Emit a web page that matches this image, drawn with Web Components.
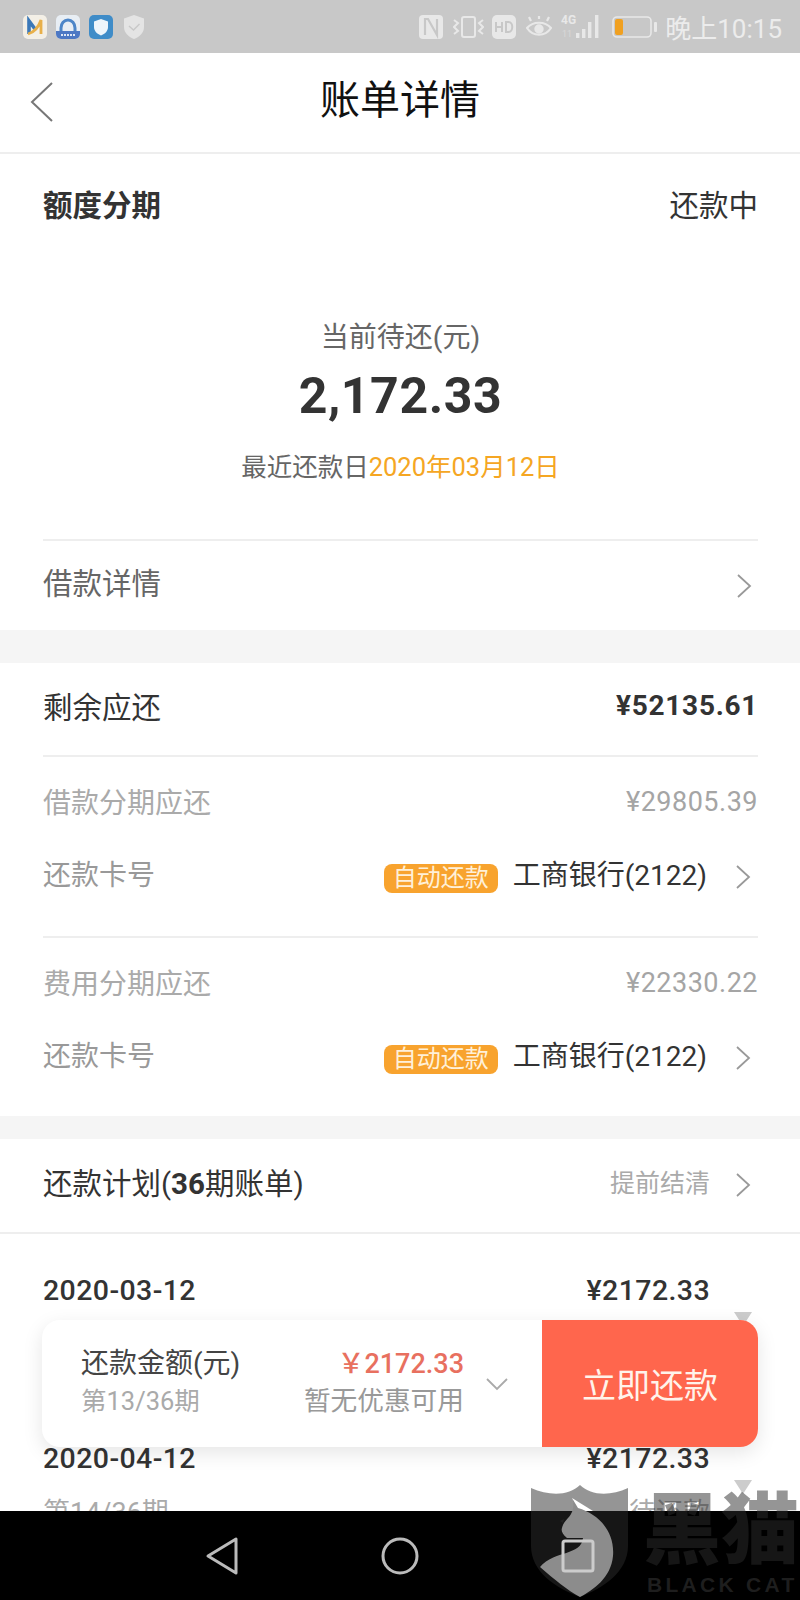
<!DOCTYPE html>
<html>
<head>
<meta charset="utf-8">
<style>
html, body { margin: 0; padding: 0; background: #fff; }
body { width: 800px; height: 1600px; overflow: hidden; font-family: Roboto, "Noto Sans CJK SC", sans-serif; }
</style>
</head>
<body>
<bill-app>
  <status-bar slot="status"></status-bar>
  <nav-header slot="nav" title="账单详情"></nav-header>

  <bill-section style="height:476px">
    <summary-card></summary-card>
  </bill-section>
  <gap-bar h="33"></gap-bar>
  <bill-section style="height:453px">
    <remain-panel></remain-panel>
  </bill-section>
  <gap-bar h="23"></gap-bar>
  <plan-panel></plan-panel>

  <pay-bar slot="over"></pay-bar>
  <system-nav slot="over"></system-nav>
  <black-cat slot="over"></black-cat>
</bill-app>

<script>
const CJK = 'Roboto, "Noto Sans CJK SC", sans-serif'

function chevron(color) {
    return `<svg width="16" height="26" viewBox="0 0 16 26" fill="none"><path d="M2 2 L14 13 L2 24" stroke="${color || '#999'}" stroke-width="1.8"/></svg>`
}

class BillApp extends HTMLElement {
    constructor() {
        super()
        this.attachShadow({mode: 'open'}).innerHTML = `
        <style>
            :host { display: block; position: relative; width: 800px; height: 1600px; overflow: hidden; background: #fff; color: #333; font-family: ${CJK}; }
            .wrap { display: flex; flex-direction: column; height: 1600px; }
            .content { flex: 1; overflow: hidden; }
        </style>
        <div class="wrap">
            <slot name="status"></slot>
            <slot name="nav"></slot>
            <div class="content"><slot></slot></div>
        </div>
        <slot name="over"></slot>`
    }
}

class StatusBar extends HTMLElement {
    constructor() {
        super()
        this.attachShadow({mode: 'open'}).innerHTML = `
        <style>
            :host { display: flex; align-items: center; justify-content: space-between; height: 53px; background: #c8c8c8; padding: 0 18px 0 23px; box-sizing: border-box; }
            .l, .r { display: flex; align-items: center; }
            .l { gap: 9px; }
            svg { display: block; }
            .time { color: #ececec; font-size: 26px; margin-left: 8px; }
        </style>
        <div class="l">
            <svg width="24" height="24" viewBox="0 0 24 24"><rect width="24" height="24" rx="5" fill="#f3efe6"/><path d="M6 19 V6 L12 14" fill="none" stroke="#3b78b8" stroke-width="3.6"/><path d="M5 19 C12 17 16 11 18 5 V19" fill="none" stroke="#e8b04a" stroke-width="2.8"/></svg>
            <svg width="24" height="24" viewBox="0 0 24 24"><rect width="24" height="24" rx="5" fill="#e8eef4"/><path d="M5 16 V13 A7 8 0 0 1 19 13 V16" fill="none" stroke="#4d86c8" stroke-width="3"/><path d="M0 16 H24 V19 A5 5 0 0 1 19 24 H5 A5 5 0 0 1 0 19 Z" fill="#4d78c4"/><path d="M5 20 H19" stroke="#dfe8f5" stroke-width="2" stroke-dasharray="2 1"/></svg>
            <svg width="24" height="24" viewBox="0 0 24 24"><rect width="24" height="24" rx="5" fill="#3f8cc8"/><path d="M12 4 L19 6.5 V12 C19 16 16 19 12 20.5 C8 19 5 16 5 12 V6.5 Z" fill="#eef5fb"/></svg>
            <svg width="22" height="26" viewBox="0 0 22 26" style="margin-left:1px"><path d="M11 1 L21 4.5 V13 C21 19 16 23 11 25 C6 23 1 19 1 13 V4.5 Z" fill="#e4e4e4"/><path d="M6 12 L10.5 16 L16.5 10" fill="none" stroke="#c8c8c8" stroke-width="1.4"/></svg>
        </div>
        <div class="r">
            <svg width="24" height="24" viewBox="0 0 24 24"><rect width="24" height="24" rx="4" fill="#e8e8e8"/><path d="M6 20 V4 L9 4 L18 20 L18 4" fill="none" stroke="#c8c8c8" stroke-width="2.2"/></svg>
            <svg style="margin-left:10px" width="31" height="24" viewBox="0 0 31 24" fill="none" stroke="#e8e8e8" stroke-width="2"><rect x="9" y="2" width="13" height="20" rx="2"/><path d="M1 5 L5 8 L1 12 L5 16 L1 19 M30 5 L26 8 L30 12 L26 16 L30 19"/></svg>
            <svg style="margin-left:8px" width="24" height="24" viewBox="0 0 24 24"><rect width="24" height="24" rx="5" fill="#e8e8e8"/><path d="M4 7 V17 M10 7 V17 M4 12 H10 M14 7 V17 H16.5 C21.5 17 21.5 7 16.5 7 Z" fill="none" stroke="#c8c8c8" stroke-width="2"/></svg>
            <svg style="margin-left:10px" width="26" height="22" viewBox="0 0 26 22" fill="none" stroke="#e8e8e8" stroke-width="2.2"><path d="M1 12 C7 5 19 5 25 12 C19 21 7 21 1 12 Z"/><circle cx="13" cy="13" r="3.6" fill="#e8e8e8"/><path d="M5 5 L3 1 M13 3 V0 M21 5 L23 1"/></svg>
            <svg style="margin-left:9px" width="39" height="25" viewBox="0 0 39 25"><text x="0" y="10" font-size="12" font-weight="700" fill="#e8e8e8" font-family="Roboto">4G</text><text x="1" y="23" font-size="9" fill="#d8d8d8" font-family="Roboto">11</text><rect x="15" y="19" width="3.4" height="5" fill="#e8e8e8"/><rect x="21" y="15" width="3.4" height="9" fill="#e8e8e8"/><rect x="27" y="8" width="3.4" height="16" fill="#e8e8e8"/><rect x="34" y="1" width="3.4" height="23" fill="#e8e8e8"/></svg>
            <svg style="margin-left:12px" width="45" height="22" viewBox="0 0 45 22"><rect x="1" y="1" width="38" height="20" rx="4" fill="none" stroke="#e8e8e8" stroke-width="1.6"/><rect x="3" y="3" width="8" height="16" rx="2" fill="#f0a020"/><rect x="42" y="6" width="3" height="10" rx="1" fill="#e8e8e8"/></svg>
            <span class="time">晚上10:15</span>
        </div>`
    }
}

class NavHeader extends HTMLElement {
    constructor() {
        super()
        this.attachShadow({mode: 'open'}).innerHTML = `
        <style>
            :host { display: flex; align-items: center; justify-content: center; position: relative; height: 101px; box-sizing: border-box; background: #fff; border-bottom: 2px solid #eee; padding-bottom: 12px; }
            h1 { margin: 0; font-weight: 400; font-size: 40px; color: #111; }
            svg { position: absolute; left: 30px; top: 29px; }
        </style>
        <svg width="24" height="40" viewBox="0 0 24 40" fill="none"><path d="M22 1 L2 20 L22 39" stroke="#777" stroke-width="2"/></svg>
        <h1>${this.getAttribute('title')}</h1>`
    }
}

class BillSection extends HTMLElement {
    constructor() {
        super()
        this.attachShadow({mode: 'open'}).innerHTML = `
        <style>:host { display: block; background: #fff; padding: 0 42px 0 43px; box-sizing: border-box; }</style>
        <slot></slot>`
    }
}

class GapBar extends HTMLElement {
    constructor() {
        super()
        this.attachShadow({mode: 'open'}).innerHTML = `
        <style>:host { display: block; background: #f5f5f5; height: ${this.getAttribute('h')}px; }</style>`
    }
}

class SummaryCard extends HTMLElement {
    constructor() {
        super()
        this.attachShadow({mode: 'open'}).innerHTML = `
        <style>
            :host { display: flex; flex-direction: column; height: 476px; }
            .top { display: flex; justify-content: space-between; align-items: center; height: 100px; padding-bottom: 2px; box-sizing: border-box; }
            b { font-size: 29.5px; font-weight: 700; color: #333; }
            .state { font-size: 29.5px; color: #333; }
            .mid { height: 287px; display: flex; flex-direction: column; align-items: center; border-bottom: 2px solid #eee; box-sizing: border-box; }
            .lab { font-size: 28px; color: #666; margin-top: 66px; line-height: 36px; }
            .amt { font-size: 50px; font-weight: 700; color: #333; line-height: 62px; margin-top: 9px; letter-spacing: .6px; }
            .date { font-size: 25.5px; color: #666; line-height: 32px; margin-top: 24px; }
            .date span { color: #f5a623; }
            .foot { flex: 1; display: flex; justify-content: space-between; align-items: center; color: #666; font-size: 29.5px; padding-right: 6px; }
            .foot span { margin-bottom: 9px; }
        </style>
        <div class="top"><b>额度分期</b><span class="state">还款中</span></div>
        <div class="mid">
            <div class="lab">当前待还(元)</div>
            <div class="amt">2,172.33</div>
            <div class="date">最近还款日<span>2020年03月12日</span></div>
        </div>
        <div class="foot"><span>借款详情</span>${chevron()}</div>`
    }
}

class RepayRow extends HTMLElement {
    constructor() {
        super()
        this.attachShadow({mode: 'open'}).innerHTML = `
        <style>
            :host { display: block; height: 181px; box-sizing: border-box; }
            :host([last]) { height: 178px; }
            :host(:not([last])) { border-bottom: 2px solid #eee; }
            .a { display: flex; justify-content: space-between; align-items: center; height: 94px; padding-bottom: 6px; box-sizing: border-box; color: #aaa; font-size: 28px; }
            .a span:last-child { font-size: 27px; color: #a5a5a5; letter-spacing: .5px; margin-top: 2px; }
            .b { display: flex; align-items: center; height: 46px; margin-top: -1px; color: #999; font-size: 28px; }
            .b > span:first-child { flex: 1; }
            .tag { background: #f8a32e; color: #fff0d8; border-radius: 8px; font-size: 24px; line-height: 29px; height: 29px; padding: 0 9px; margin-right: 15px; margin-top: 10px; }
            .bank { color: #333; font-size: 28px; margin-right: 28px; }
            svg { margin-right: 7px; margin-top: 8px; }
        </style>
        <div class="a"><span>${this.getAttribute('label')}</span><span>${this.getAttribute('amount')}</span></div>
        <div class="b"><span>还款卡号</span><span class="tag">自动还款</span><span class="bank">工商银行(2122)</span>${chevron()}</div>`
    }
}

class RemainPanel extends HTMLElement {
    constructor() {
        super()
        this.attachShadow({mode: 'open'}).innerHTML = `
        <style>
            :host { display: block; }
            .head { display: flex; justify-content: space-between; align-items: center; height: 94px; padding-bottom: 7px; box-sizing: border-box; border-bottom: 2px solid #eee; font-size: 29.5px; color: #333; }
            .head span { margin-bottom: 2px; }
            b { font-size: 28px; font-weight: 700; letter-spacing: .7px; }
        </style>
        <div class="head"><span>剩余应还</span><b>¥52135.61</b></div>
        <repay-row label="借款分期应还" amount="¥29805.39"></repay-row>
        <repay-row last label="费用分期应还" amount="¥22330.22"></repay-row>`
    }
}

class PlanRow extends HTMLElement {
    constructor() {
        super()
        this.attachShadow({mode: 'open'}).innerHTML = `
        <style>
            :host { display: block; position: relative; height: 168px; padding: 0 90px 0 43px; }
            .a { display: flex; justify-content: space-between; align-items: center; height: 56px; margin-bottom: 2px; font-size: 28.5px; color: #333; font-weight: 500; letter-spacing: .4px; }
            .b { display: flex; justify-content: space-between; align-items: center; height: 36px; margin-top: 6px; font-size: 27px; color: #aaa; }
            i { position: absolute; right: 48px; top: 50px; width: 0; height: 0; border: 9px solid transparent; border-top: 14px solid #ccc; border-bottom: 0; }
        </style>
        <div class="a"><span>${this.getAttribute('date')}</span><span>¥2172.33</span></div>
        <i></i>
        <div class="b"><span>${this.getAttribute('term')}</span><span>待还款</span></div>`
    }
}

class PlanPanel extends HTMLElement {
    constructor() {
        super()
        this.attachShadow({mode: 'open'}).innerHTML = `
        <style>
            :host { display: block; }
            .head { display: flex; align-items: center; height: 95px; margin-bottom: 28px; border-bottom: 2px solid #eee; box-sizing: border-box; padding: 0 48px 8px 43px; font-size: 29.5px; color: #333; }
            .t { flex: 1; margin-bottom: 2px; }
            b { font-weight: 700; }
            .s { color: #aaa; font-size: 25px; margin-right: 25px; margin-bottom: 2px; }
            svg { margin-top: 6px; margin-right: 1px; }
        </style>
        <div class="head"><span class="t">还款计划(<b>36</b>期账单)</span><span class="s">提前结清</span>${chevron()}</div>
        <plan-row date="2020-03-12" term="第13/36期"></plan-row>
        <plan-row date="2020-04-12" term="第14/36期"></plan-row>`
    }
}

class PayBar extends HTMLElement {
    constructor() {
        super()
        this.attachShadow({mode: 'open'}).innerHTML = `
        <style>
            :host { display: flex; position: absolute; left: 42px; top: 1320px; width: 716px; height: 127px; border-radius: 18px; background: #fff; box-shadow: 0 6px 20px rgba(0,0,0,.1); }
            .info { flex: 1; display: flex; padding-left: 39px; }
            .l, .m { display: flex; flex-direction: column; justify-content: center; padding-bottom: 4px; }
            .l { flex: 1; }
            .t { font-size: 28px; color: #444; line-height: 38px; }
            .s { font-size: 25.5px; color: #aaa; line-height: 36px; }
            .m { align-items: flex-end; }
            .p { font-size: 27px; font-weight: 500; color: #e8705f; line-height: 38px; }
            .n { font-size: 26.7px; color: #999; line-height: 36px; }
            .arrow { width: 78px; display: flex; align-items: center; justify-content: center; padding-right: 12px; box-sizing: border-box; }
            button { all: unset; width: 216px; background: #ff664d; color: #fff3ea; font-size: 34px; text-align: center; border-radius: 0 18px 18px 0; font-family: inherit; }
        </style>
        <div class="info">
            <div class="l"><div class="t">还款金额(元)</div><div class="s">第13/36期</div></div>
            <div class="m"><div class="p">￥2172.33</div><div class="n">暂无优惠可用</div></div>
            <div class="arrow"><svg width="22" height="14" viewBox="0 0 22 14" fill="none"><path d="M1 2 L11 12 L21 2" stroke="#aaa" stroke-width="1.8"/></svg></div>
        </div>
        <button>立即还款</button>`
    }
}

class BlackCat extends HTMLElement {
    constructor() {
        super()
        this.attachShadow({mode: 'open'}).innerHTML = `
        <style>
            :host { display: block; position: absolute; left: 531px; top: 1484px; width: 269px; height: 116px; z-index: 3; pointer-events: none; color: rgba(44,44,44,.5); }
            svg { position: absolute; left: 0; top: 0; }
            .cn { position: absolute; left: 112px; top: -2px; font-size: 78px; line-height: 84px; font-weight: 900; white-space: nowrap; font-family: "Noto Sans CJK SC", sans-serif; }
            .en { position: absolute; left: 116px; top: 88px; font-size: 21px; line-height: 26px; font-weight: 700; letter-spacing: 3.3px; white-space: nowrap; font-family: "Liberation Sans", sans-serif; color: rgba(60,60,60,.5); }
        </style>
        <svg width="100" height="116" viewBox="0 0 100 116">
            <path d="M0 4 C18 12 38 12 49 1 C60 12 80 12 97 4 V62 C97 88 72 104 49 113 C25 104 0 88 0 62 Z" fill="rgba(44,44,44,.5)"/>
            <path d="M41 14 L62 27 L46 27 Z" fill="#fff"/>
            <path d="M41 14 L47 24 C68 30 84 48 82 72 C80 94 62 106 49 113 C36 106 24 96 9 83 C24 66 50 72 52 54 L36 54 C31 50 30 46 31 44 C32 38 38 34 40 30 C43 24 43 20 41 14 Z" fill="#8c8c8c"/>
            <path d="M29 37 L33 35 L32 39 Z" fill="#222"/>
        </svg>
        <span class="cn">黑猫</span>
        <span class="en">BLACK CAT</span>`
    }
}

class SystemNav extends HTMLElement {
    constructor() {
        super()
        this.attachShadow({mode: 'open'}).innerHTML = `
        <style>
            :host { display: block; position: absolute; left: 0; top: 1511px; width: 800px; height: 89px; background: #000; }
            svg { position: absolute; z-index: 4; }
        </style>
        <svg style="left:205px;top:25px" width="34" height="40" viewBox="0 0 34 40" fill="none"><path d="M31 3 V37 L3 20 Z" stroke="#bbb" stroke-width="3" stroke-linejoin="round"/></svg>
        <svg style="left:380px;top:25px" width="40" height="40" viewBox="0 0 40 40" fill="none"><circle cx="20" cy="20" r="17" stroke="#bbb" stroke-width="3"/></svg>
        <svg style="left:560px;top:27px" width="36" height="36" viewBox="0 0 36 36" fill="none"><rect x="3" y="3" width="30" height="30" rx="2" stroke="#ccc" stroke-width="3"/></svg>`
    }
}

customElements.define('bill-app', BillApp)
customElements.define('status-bar', StatusBar)
customElements.define('nav-header', NavHeader)
customElements.define('bill-section', BillSection)
customElements.define('gap-bar', GapBar)
customElements.define('summary-card', SummaryCard)
customElements.define('repay-row', RepayRow)
customElements.define('remain-panel', RemainPanel)
customElements.define('plan-row', PlanRow)
customElements.define('plan-panel', PlanPanel)
customElements.define('pay-bar', PayBar)
customElements.define('black-cat', BlackCat)
customElements.define('system-nav', SystemNav)
</script>
</body>
</html>
